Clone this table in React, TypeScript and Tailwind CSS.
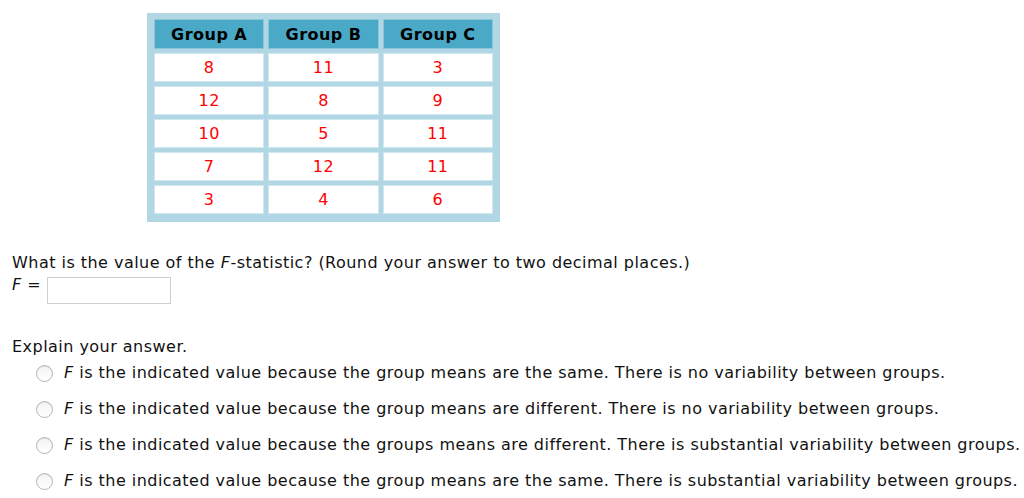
const rows = [
  ["8", "11", "3"],
  ["12", "8", "9"],
  ["10", "5", "11"],
  ["7", "12", "11"],
  ["3", "4", "6"],
];

const options = [
  "is the indicated value because the group means are the same. There is no variability between groups.",
  "is the indicated value because the group means are different. There is no variability between groups.",
  "is the indicated value because the groups means are different. There is substantial variability between groups.",
  "is the indicated value because the group means are the same. There is substantial variability between groups.",
];

function Radio() {
  return (
    <span className="inline-block h-[17px] w-[17px] shrink-0 rounded-full border border-[#b5b5b5] bg-gradient-to-b from-[#f4f4f4] to-white shadow-[inset_0_1px_1px_rgba(0,0,0,0.08)]" />
  );
}

export default function App() {
  return (
    <div className="min-h-[498px] w-[1024px] bg-white text-[16px] tracking-[0.47px] text-[#111] font-['DejaVu_Sans',sans-serif]">
      <div className="pl-[147px] pt-[13px]">
        <div className="w-[353px] bg-[#b1d7e4] px-[7px] pt-[6px] pb-[8px]">
          <div className="grid grid-cols-3 gap-[4px]">
            {["Group A", "Group B", "Group C"].map((h) => (
              <div
                key={h}
                className="flex h-[30px] items-center justify-center border border-[#8cc6d8] bg-[#4aa9c6] pt-[1px] font-bold text-black"
              >
                {h}
              </div>
            ))}
            {rows.flat().map((v, i) => (
              <div
                key={i}
                className="flex h-[29px] items-center justify-center border border-[#cfe7ef] bg-white pt-[1px] text-[#ff0000]"
              >
                {v}
              </div>
            ))}
          </div>
        </div>
      </div>

      <div className="pl-[12px] pt-[30px]">
        <p className="leading-[22px]">
          What is the value of the <i>F</i>-statistic? (Round your answer to two decimal places.)
        </p>
        <div className="flex items-start gap-[6px]">
          <span className="leading-[22px]">
            <i>F</i> =
          </span>
          <span className="mt-[3px] inline-block h-[27px] w-[124px] border border-[#cfcfcf] bg-white" />
        </div>

        <p className="mt-[32px] leading-[22px]">Explain your answer.</p>
        <div className="mt-[4px] flex flex-col gap-[14px] pl-[24px]">
          {options.map((o, i) => (
            <div key={i} className="flex h-[22px] items-center gap-[11px]">
              <Radio />
              <span>
                <i>F</i> {o}
              </span>
            </div>
          ))}
        </div>
      </div>
    </div>
  );
}
